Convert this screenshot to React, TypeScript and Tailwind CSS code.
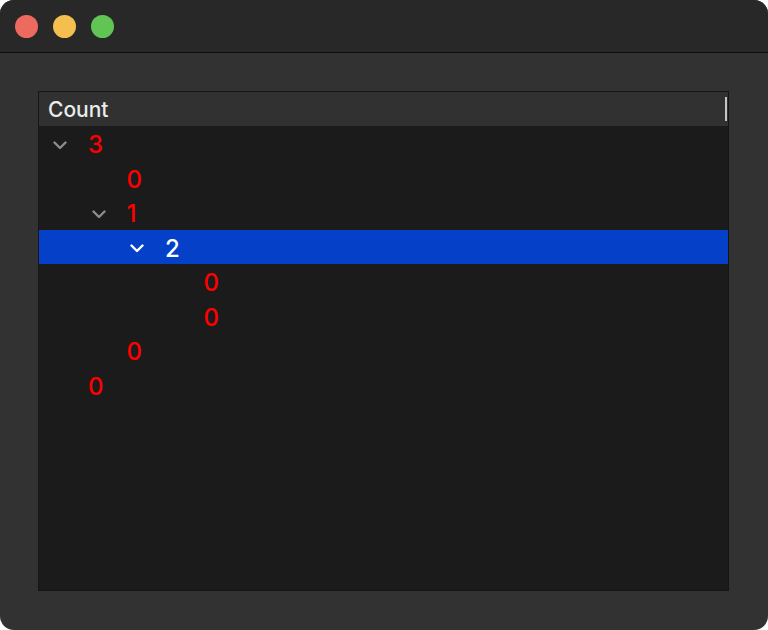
import React from "react";

type Row = { level: number; value: string; expandable: boolean; selected?: boolean };

const rows: Row[] = [
  { level: 0, value: "3", expandable: true },
  { level: 1, value: "0", expandable: false },
  { level: 1, value: "1", expandable: true },
  { level: 2, value: "2", expandable: true, selected: true },
  { level: 3, value: "0", expandable: false },
  { level: 3, value: "0", expandable: false },
  { level: 1, value: "0", expandable: false },
  { level: 0, value: "0", expandable: false },
];

function Chevron({ selected }: { selected?: boolean }) {
  return (
    <svg width="14" height="9" viewBox="0 0 14 9" className="block">
      <path
        d="M1.5 1.5 L7 7 L12.5 1.5"
        fill="none"
        stroke={selected ? "#ffffff" : "#8c8c8c"}
        strokeWidth="2.4"
        strokeLinecap="round"
        strokeLinejoin="round"
      />
    </svg>
  );
}

export default function App() {
  return (
    <div className="w-[768px] h-[630px] bg-white" style={{ fontFamily: "Inter, 'Liberation Sans', sans-serif" }}>
      <div className="w-full h-full rounded-[14px] overflow-hidden flex flex-col bg-[#323232]">
        <div className="h-[53px] bg-[#282828] border-b border-[#0e0e0e] flex items-center pl-[15px] gap-[15px] shrink-0">
          <div className="w-[23px] h-[23px] rounded-full bg-[#ec6a5e]" />
          <div className="w-[23px] h-[23px] rounded-full bg-[#f4bf4f]" />
          <div className="w-[23px] h-[23px] rounded-full bg-[#61c554]" />
        </div>
        <div className="flex-1 pt-[38px] pl-[38px] pr-[39px] pb-[39px] flex">
          <div className="flex-1 border border-[#161616] bg-[#1b1b1b] flex flex-col">
            <div className="h-[34px] bg-[#313131] flex items-center justify-between pl-[9px] pr-[1px] shrink-0">
              <span className="text-[21px] font-medium text-[#ebebeb] leading-none">Count</span>
              <div className="w-[2px] h-[24px] bg-[#c4c4c4]" />
            </div>
            {rows.map((r, i) => (
              <div
                key={i}
                className={`h-[34.5px] pt-[4px] flex items-center ${r.selected ? "bg-[#0541c8]" : ""}`}
              >
                <div style={{ width: 11 + r.level * 38.5 }} className="shrink-0" />
                <div className="w-[20px] flex justify-center shrink-0">
                  {r.expandable ? <Chevron selected={r.selected} /> : null}
                </div>
                <span
                  className={`ml-[18px] text-[24px] font-medium leading-none ${r.selected ? "text-white" : "text-[#ff0000]"}`}
                >
                  {r.value}
                </span>
              </div>
            ))}
          </div>
        </div>
      </div>
    </div>
  );
}
